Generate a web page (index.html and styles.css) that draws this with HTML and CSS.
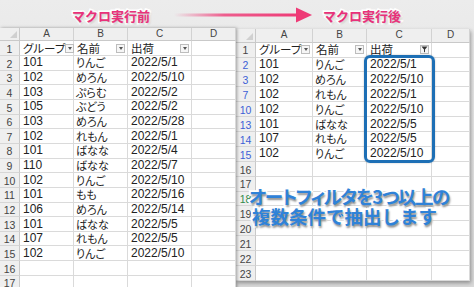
FILE: index.html
```html
<!DOCTYPE html>
<html lang="ja">
<head>
<meta charset="utf-8">
<title>マクロ実行前後</title>
<link rel="stylesheet" href="styles.css">
</head>
<body>
<div class="page">
  <header class="titles">
    <span class="title title-before">マクロ実行前</span>
    <svg class="arrow" width="138" height="18" viewBox="0 0 138 18" aria-hidden="true">
      <defs>
        <linearGradient id="ag" x1="0" y1="0" x2="1" y2="0">
          <stop offset="0" stop-color="#ee3a76" stop-opacity="0"/>
          <stop offset="0.4" stop-color="#ee3a76" stop-opacity="0.8"/>
          <stop offset="1" stop-color="#ee3a76"/>
        </linearGradient>
      </defs>
      <rect x="0" y="7.5" width="126" height="3" fill="url(#ag)"/>
      <path d="M122 1.5 L138 9 L122 16.5 Z" fill="#ee3a76"/>
    </svg>
    <span class="title title-after">マクロ実行後</span>
  </header>

  <div class="sheets">
    <div class="sheet sheet-before">
      <div class="corner"></div><div class="ch">A</div><div class="ch">B</div><div class="ch">C</div><div class="ch">D</div>
      <div class="rh">1</div><div class="c hd"><span class="jp">グループ</span><span class="fb"></span></div><div class="c hd"><span class="jp">名前</span><span class="fb"></span></div><div class="c hd"><span class="jp">出荷</span><span class="fb"></span></div><div class="c"></div>
      <div class="rh">2</div><div class="c">101</div><div class="c jp">りんご</div><div class="c">2022/5/1</div><div class="c"></div>
      <div class="rh">3</div><div class="c">102</div><div class="c jp">めろん</div><div class="c">2022/5/10</div><div class="c"></div>
      <div class="rh">4</div><div class="c">103</div><div class="c jp">ぷらむ</div><div class="c">2022/5/2</div><div class="c"></div>
      <div class="rh">5</div><div class="c">105</div><div class="c jp">ぶどう</div><div class="c">2022/5/2</div><div class="c"></div>
      <div class="rh">6</div><div class="c">103</div><div class="c jp">めろん</div><div class="c">2022/5/28</div><div class="c"></div>
      <div class="rh">7</div><div class="c">102</div><div class="c jp">れもん</div><div class="c">2022/5/1</div><div class="c"></div>
      <div class="rh">8</div><div class="c">101</div><div class="c jp">ばなな</div><div class="c">2022/5/4</div><div class="c"></div>
      <div class="rh">9</div><div class="c">110</div><div class="c jp">ばなな</div><div class="c">2022/5/7</div><div class="c"></div>
      <div class="rh">10</div><div class="c">102</div><div class="c jp">りんご</div><div class="c">2022/5/10</div><div class="c"></div>
      <div class="rh">11</div><div class="c">101</div><div class="c jp">もも</div><div class="c">2022/5/16</div><div class="c"></div>
      <div class="rh">12</div><div class="c">106</div><div class="c jp">めろん</div><div class="c">2022/5/14</div><div class="c"></div>
      <div class="rh">13</div><div class="c">101</div><div class="c jp">ばなな</div><div class="c">2022/5/5</div><div class="c"></div>
      <div class="rh">14</div><div class="c">107</div><div class="c jp">れもん</div><div class="c">2022/5/5</div><div class="c"></div>
      <div class="rh">15</div><div class="c">102</div><div class="c jp">りんご</div><div class="c">2022/5/10</div><div class="c"></div>
      <div class="rh">16</div><div class="c"></div><div class="c"></div><div class="c"></div><div class="c"></div>
      <div class="rh">17</div><div class="c"></div><div class="c"></div><div class="c"></div><div class="c"></div>
    </div>

    <div class="sheet sheet-after">
      <div class="corner"></div><div class="ch">A</div><div class="ch">B</div><div class="ch">C</div><div class="ch">D</div>
      <div class="rh">1</div><div class="c hd"><span class="jp">グループ</span><span class="fb"></span></div><div class="c hd"><span class="jp">名前</span><span class="fb"></span></div><div class="c hd"><span class="jp">出荷</span><span class="fb fb-on"><svg width="7" height="7" viewBox="0 0 7 7"><path d="M0.5 0.5 H6.5 L4 3.5 V6.5 L3 5.8 V3.5 Z" fill="#333"/></svg></span></div><div class="c"></div>
      <div class="rh hit">2</div><div class="c">101</div><div class="c jp">りんご</div><div class="c">2022/5/1</div><div class="c"></div>
      <div class="rh hit">3</div><div class="c">102</div><div class="c jp">めろん</div><div class="c">2022/5/10</div><div class="c"></div>
      <div class="rh hit">7</div><div class="c">102</div><div class="c jp">れもん</div><div class="c">2022/5/1</div><div class="c"></div>
      <div class="rh hit">10</div><div class="c">102</div><div class="c jp">りんご</div><div class="c">2022/5/10</div><div class="c"></div>
      <div class="rh hit">13</div><div class="c">101</div><div class="c jp">ばなな</div><div class="c">2022/5/5</div><div class="c"></div>
      <div class="rh hit">14</div><div class="c">107</div><div class="c jp">れもん</div><div class="c">2022/5/5</div><div class="c"></div>
      <div class="rh hit">15</div><div class="c">102</div><div class="c jp">りんご</div><div class="c">2022/5/10</div><div class="c"></div>
      <div class="rh">16</div><div class="c"></div><div class="c"></div><div class="c"></div><div class="c"></div>
      <div class="rh">17</div><div class="c"></div><div class="c"></div><div class="c"></div><div class="c"></div>
      <div class="rh active">18</div><div class="c"></div><div class="c"></div><div class="c"></div><div class="c"></div>
      <div class="rh">19</div><div class="c"></div><div class="c"></div><div class="c"></div><div class="c"></div>
      <div class="rh">20</div><div class="c"></div><div class="c"></div><div class="c"></div><div class="c"></div>
      <div class="rh">21</div><div class="c"></div><div class="c"></div><div class="c"></div><div class="c"></div>
      <div class="rh">22</div><div class="c"></div><div class="c"></div><div class="c"></div><div class="c"></div>
      <div class="rh">23</div><div class="c"></div><div class="c"></div><div class="c"></div><div class="c"></div>

      <div class="highlight"></div>
      <p class="caption"><span class="cap-line cap-1">オートフィルタを3つ以上の</span><span class="cap-line cap-2">複数条件で抽出します</span></p>
    </div>
  </div>
</div>
</body>
</html>
```

FILE: styles.css
```css
* { box-sizing: border-box; }

html, body {
  margin: 0;
  padding: 0;
}

body {
  width: 474px;
  height: 287px;
  overflow: hidden;
  background: linear-gradient(180deg, #ececec 0%, #e2e2e2 60%, #d9d9d9 100%);
  font-family: "Liberation Sans", "Noto Sans CJK JP", sans-serif;
}

.page {
  display: flex;
  flex-direction: column;
}

/* ---------- titles ---------- */
.titles {
  height: 28px;
  display: flex;
  align-items: center;
  padding-left: 72px;
}

.title {
  font-family: "Noto Sans CJK JP", sans-serif;
  font-weight: 700;
  font-size: 13px;
  line-height: 16px;
  color: #e8317a;
  -webkit-text-stroke: 3px #ffffff;
  paint-order: stroke fill;
  text-shadow: 1px 1px 2px rgba(0, 0, 0, 0.25);
  margin-top: 3px;
}

.arrow {
  display: block;
  margin-left: 24px;
  margin-right: 11px;
  margin-top: 1px;
}

/* ---------- sheets ---------- */
.sheets {
  display: flex;
  align-items: flex-start;
}

.sheet {
  display: grid;
  background: #ffffff;
  position: relative;
  font-size: 12px;
  color: #222;
}

.sheet-before {
  width: 236px;
  grid-template-columns: 20px 54px 54px 64px 44px;
  grid-template-rows: 13.3px repeat(17, 14.67px);
  box-shadow: 1px 0 3px rgba(0, 0, 0, 0.35);
  z-index: 1;
}

.sheet-after {
  width: 234px;
  margin-top: 1px;
  grid-template-columns: 20px 57px 54px 65px 38px;
  grid-template-rows: 13.7px repeat(16, 14.9px);
  box-shadow: 1px 2px 4px rgba(0, 0, 0, 0.35);
}

.corner {
  background: #efefef;
  border-right: 1px solid #c9c9c9;
  border-bottom: 1px solid #c9c9c9;
  position: relative;
}
.corner::after {
  content: "";
  position: absolute;
  right: 2px;
  bottom: 2px;
  border-style: solid;
  border-width: 0 0 7px 7px;
  border-color: transparent transparent #d0d0d0 transparent;
}

.ch {
  background: #efefef;
  border-right: 1px solid #d2d2d2;
  border-bottom: 1px solid #c9c9c9;
  font-size: 10px;
  color: #444;
  display: flex;
  align-items: center;
  justify-content: center;
  line-height: 1;
}

.rh {
  background: #efefef;
  border-right: 1px solid #c9c9c9;
  border-bottom: 1px solid #d6d6d6;
  font-size: 10.5px;
  color: #444;
  display: flex;
  align-items: center;
  justify-content: center;
  line-height: 1;
  padding-top: 2px;
}
.rh.hit { color: #3d5fd6; }
.rh.active { color: #2f8a4a; }

.c {
  border-right: 1px solid #dadada;
  border-bottom: 1px solid #dadada;
  display: flex;
  align-items: center;
  padding-left: 3px;
  line-height: 13px;
  white-space: nowrap;
  min-width: 0;
}

.jp {
  font-family: "Noto Sans CJK JP", sans-serif;
  font-size: 11px;
  font-feature-settings: "palt";
  flex: none;
}

.c.jp { padding-left: 2px; }

.hd .jp { font-size: 11.5px; }

.fb {
  margin-left: auto;
  margin-right: 2px;
  width: 9px;
  height: 9px;
  border: 1px solid #bdbdbd;
  background: #f6f6f6;
  flex: none;
  display: flex;
  align-items: center;
  justify-content: center;
}
.fb::after {
  content: "";
  border-style: solid;
  border-width: 3px 2.5px 0 2.5px;
  border-color: #555 transparent transparent transparent;
}
.fb-on::after { display: none; }
.fb-on svg { display: block; }

/* ---------- overlays on the result sheet ---------- */
.highlight {
  position: absolute;
  left: 128px;
  top: 26px;
  width: 71px;
  height: 108px;
  border: 3px solid #1d6fb5;
  border-radius: 6px;
  box-shadow: 0 0 2px rgba(0, 0, 0, 0.25);
}

.caption {
  position: absolute;
  left: 13px;
  top: 157px;
  margin: 0;
  display: flex;
  flex-direction: column;
  font-family: "Noto Sans CJK JP", sans-serif;
  font-weight: 700;
  font-size: 18.5px;
  line-height: 20px;
  color: #2f82d8;
  -webkit-text-stroke: 3.5px #ffffff;
  paint-order: stroke fill;
  text-shadow: 1px 2px 2px rgba(0, 0, 0, 0.45);
  white-space: nowrap;
}

.cap-1 {
  font-feature-settings: "palt";
  letter-spacing: -1.4px;
}
.cap-2 { margin-left: 3px; }
```
